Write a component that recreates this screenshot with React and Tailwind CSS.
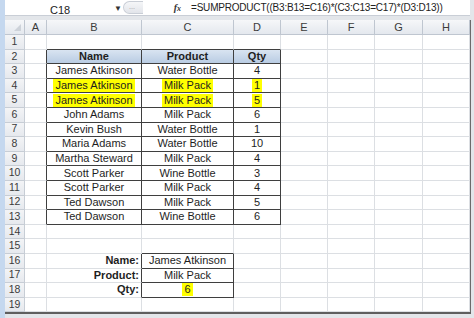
import React from "react";

const COLS = ["A", "B", "C", "D", "E", "F", "G", "H"];

const data = {
  2: ["Name", "Product", "Qty"],
  3: ["James Atkinson", "Water Bottle", "4"],
  4: ["James Atkinson", "Milk Pack", "1"],
  5: ["James Atkinson", "Milk Pack", "5"],
  6: ["John Adams", "Milk Pack", "6"],
  7: ["Kevin Bush", "Water Bottle", "1"],
  8: ["Maria Adams", "Water Bottle", "10"],
  9: ["Martha Steward", "Milk Pack", "4"],
  10: ["Scott Parker", "Wine Bottle", "3"],
  11: ["Scott Parker", "Milk Pack", "4"],
  12: ["Ted Dawson", "Milk Pack", "5"],
  13: ["Ted Dawson", "Wine Bottle", "6"],
};

const labels = { 16: ["Name:", "James Atkinson"], 17: ["Product:", "Milk Pack"], 18: ["Qty:", "6"] };

function bordered(r, c) {
  if (r >= 2 && r <= 13 && c >= 1 && c <= 3) return true;
  if (r >= 16 && r <= 18 && c === 2) return true;
  return false;
}

function isHi(r, c) {
  if ((r === 4 || r === 5) && c >= 1 && c <= 3) return true;
  if (r === 18 && c === 2) return true;
  return false;
}

function Cell({ r, c }) {
  const darkR = bordered(r, c) || bordered(r, c + 1);
  const darkB = bordered(r, c) || bordered(r + 1, c);
  const header = r === 2 && c >= 1 && c <= 3;
  let text = null;
  let align = "justify-center";
  let bold = false;
  if (data[r] && c >= 1 && c <= 3) {
    text = data[r][c - 1];
    bold = r === 2;
  }
  if (labels[r] && c === 1) {
    text = labels[r][0];
    align = "justify-end pr-[2px]";
    bold = true;
  }
  if (labels[r] && c === 2) {
    text = labels[r][1];
  }
  const hi = isHi(r, c);
  return (
    <div
      className={[
        "flex items-center border-r border-b overflow-visible whitespace-nowrap text-[11px] leading-none text-[#1e1e1e]",
        align,
        darkR ? "border-r-[#3f3f3f]" : "border-r-[#dcdfe3]",
        darkB ? "border-b-[#3f3f3f]" : "border-b-[#dcdfe3]",
        header ? "bg-gradient-to-b from-[#d9e4f1] to-[#b9cce3]" : "bg-white",
        bold ? "font-bold" : "",
      ].join(" ")}
    >
      {text !== null &&
        (hi ? (
          <span className="bg-[#ffff00] px-[2px] py-[1px]">{text}</span>
        ) : (
          <span>{text}</span>
        ))}
    </div>
  );
}

export default function App() {
  const rows = Array.from({ length: 19 }, (_, i) => i + 1);
  return (
    <div
      className="w-[474px] h-[318px] overflow-hidden flex bg-[#e3e6ea]"
      style={{ fontFamily: '"Liberation Sans", Arial, sans-serif' }}
    >
      <div className="w-[5px] bg-[#c5d8ef] shrink-0" />
      <div className="flex flex-col w-[469px]">
        {/* formula bar */}
        <div className="h-[16px] flex items-center bg-white border-b border-[#c9ced6] text-[11px] text-[#222] w-[465px]">
          <div className="w-[115px] flex items-center relative h-full">
            <span className="absolute left-[45px] top-[2px]">C18</span>
            <span className="absolute left-[109px] top-[3px] text-[8px] text-[#333]">▼</span>
          </div>
          <div className="w-[20px] h-[13px] rounded-l-full border border-r-0 border-[#c9ced6] bg-gradient-to-b from-[#f5f6f8] to-[#e2e5ea] ml-[3px] flex items-center pl-[5px]">
            <span className="text-[6px] text-[#aaa] leading-none">⋯</span>
          </div>
          <div className="w-[40px] flex justify-end pr-[2px]">
            <span className="italic font-bold text-[10px] text-[#333]" style={{ fontFamily: '"Liberation Serif", serif' }}>
              f<span className="text-[8px]">x</span>
            </span>
          </div>
          <div className="ml-[4px] pl-[4px] h-full flex items-center text-[10px] tracking-[-0.2px]">
            =SUMPRODUCT((B3:B13=C16)*(C3:C13=C17)*(D3:D13))
          </div>
        </div>
        <div className="h-[4px]" />
        <div className="flex">
          <div
            className="grid w-[465px]"
            style={{
              gridTemplateColumns: "20px 22px 95px 92px 47px 47px 47px 48px 47px",
              gridTemplateRows: "15px repeat(19, 14.6px)",
            }}
          >
            <div className="relative border-r border-b border-[#bfc6d0] bg-gradient-to-b from-[#f6f7f9] to-[#e4e8ee]">
              <div className="absolute right-[3px] bottom-[3px] w-0 h-0 border-l-[7px] border-l-transparent border-b-[7px] border-b-[#cdd2d9]" />
            </div>
            {COLS.map((c) => (
              <div
                key={c}
                className="flex items-center justify-center border-r border-b border-[#bfc6d0] bg-gradient-to-b from-[#f6f7f9] to-[#e4e8ee] text-[11px] text-[#3b3b3b]"
              >
                {c}
              </div>
            ))}
            {rows.map((r) => (
              <React.Fragment key={r}>
                <div className="flex items-center justify-center border-r border-b border-[#c7cdd5] bg-gradient-to-b from-[#f3f4f6] to-[#e6e9ee] text-[10.5px] text-[#3b3b3b]">
                  {r}
                </div>
                {COLS.map((c, ci) => (
                  <Cell key={c} r={r} c={ci} />
                ))}
              </React.Fragment>
            ))}
          </div>
          <div className="w-[1px] bg-[#6b6b6b]" />
        </div>
        <div className="h-[2px] bg-[#5f5f5f] w-[466px]" />
      </div>
    </div>
  );
}
